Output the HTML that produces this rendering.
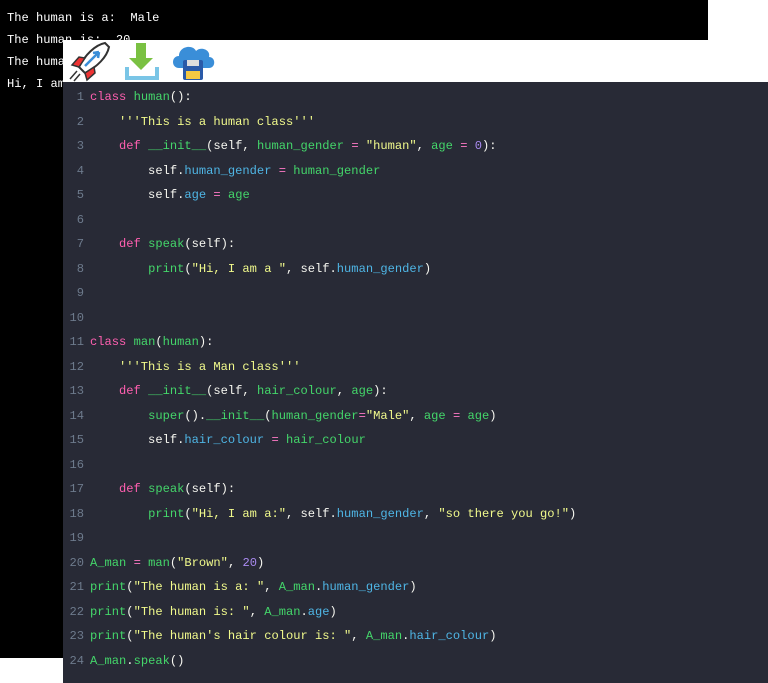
<!DOCTYPE html>
<html><head><style>
body{margin:0;width:768px;height:683px;background:#fff;position:relative;overflow:hidden;font-family:"Liberation Mono",monospace;}
#term{position:absolute;left:0;top:0;width:708px;height:658px;background:#000;color:#fff;font-size:12.1px;}
#term div{position:absolute;left:7px;white-space:pre;}
#bar{position:absolute;left:63px;top:40px;width:705px;height:42px;background:#fff;}
#code{position:absolute;left:63px;top:82px;width:705px;height:601px;background:#282a36;font-size:12.1px;}
.l{position:absolute;left:0;height:24px;white-space:pre;color:#f8f8f2;}
.n{display:inline-block;width:21px;text-align:right;color:#6d7a8c;margin-right:6px;}
.k{color:#ff5fb0}.f{color:#44d66a}.s{color:#f1fa8c}.a{color:#4fb6e6}.p{color:#a98af0}.o{color:#ff79c6}
</style></head><body>
<div id="term">
<div style="top:11px">The human is a:  Male</div>
<div style="top:33px">The human is:  20</div>
<div style="top:55px">The human's hair colour is:  Brown</div>
<div style="top:77px">Hi, I am a: Male so there you go!</div>
</div>
<div id="bar">
<svg width="230" height="42" viewBox="0 0 230 42">
<g transform="translate(6,1)">
<path d="M36 2 C26 4 16 14 10 26 L16 32 C28 26 38 16 40 6 Z" fill="#fff" stroke="#333" stroke-width="2"/>
<path d="M10 26 L3 24 L10 16 L16 17 Z" fill="#e33" stroke="#333" stroke-width="1.5"/>
<path d="M16 32 L18 39 L26 32 L25 26 Z" fill="#e33" stroke="#333" stroke-width="1.5"/>
<path d="M16 25 L30 11 M30 11 L24 12 M30 11 L29 17" stroke="#3a8ed8" stroke-width="2.5" fill="none"/>
<path d="M8 30 L1 38 M11 33 L5 40" stroke="#333" stroke-width="1.5"/>
</g>
<g transform="translate(62,3)">
<rect x="11" y="0" width="10" height="15" fill="#7ac142"/>
<path d="M4 15 L28 15 L16 27 Z" fill="#7ac142"/>
<path d="M2 24 L2 35 L32 35 L32 24" stroke="#7ac5e6" stroke-width="4" fill="none"/>
</g>
<g transform="translate(108,2)">
<path d="M8 26 C0 26 0 14 8 14 C8 4 22 2 25 9 C30 4 40 8 38 15 C45 15 45 26 38 26 Z" fill="#3a8ed8"/>
<rect x="12" y="18" width="20" height="20" rx="2" fill="#2a5aa8"/>
<rect x="16" y="18" width="12" height="6" fill="#ddd"/>
<rect x="15" y="29" width="14" height="8" fill="#f5c842"/>
</g>
</svg>
</div>
<div id="code">
<div class="l" style="top:8px"><span class="n">1</span><span class="k">class</span> <span class="f">human</span>():</div>
<div class="l" style="top:32.5px"><span class="n">2</span>    <span class="s">'''This is a human class'''</span></div>
<div class="l" style="top:57px"><span class="n">3</span>    <span class="k">def</span> <span class="f">__init__</span>(self, <span class="f">human_gender</span> <span class="o">=</span> <span class="s">"human"</span>, <span class="f">age</span> <span class="o">=</span> <span class="p">0</span>):</div>
<div class="l" style="top:81.5px"><span class="n">4</span>        self.<span class="a">human_gender</span> <span class="o">=</span> <span class="f">human_gender</span></div>
<div class="l" style="top:106px"><span class="n">5</span>        self.<span class="a">age</span> <span class="o">=</span> <span class="f">age</span></div>
<div class="l" style="top:130.5px"><span class="n">6</span></div>
<div class="l" style="top:155px"><span class="n">7</span>    <span class="k">def</span> <span class="f">speak</span>(self):</div>
<div class="l" style="top:179.5px"><span class="n">8</span>        <span class="f">print</span>(<span class="s">"Hi, I am a "</span>, self.<span class="a">human_gender</span>)</div>
<div class="l" style="top:204px"><span class="n">9</span></div>
<div class="l" style="top:228.5px"><span class="n">10</span></div>
<div class="l" style="top:253px"><span class="n">11</span><span class="k">class</span> <span class="f">man</span>(<span class="f">human</span>):</div>
<div class="l" style="top:277.5px"><span class="n">12</span>    <span class="s">'''This is a Man class'''</span></div>
<div class="l" style="top:302px"><span class="n">13</span>    <span class="k">def</span> <span class="f">__init__</span>(self, <span class="f">hair_colour</span>, <span class="f">age</span>):</div>
<div class="l" style="top:326.5px"><span class="n">14</span>        <span class="f">super</span>().<span class="f">__init__</span>(<span class="f">human_gender</span><span class="o">=</span><span class="s">"Male"</span>, <span class="f">age</span> <span class="o">=</span> <span class="f">age</span>)</div>
<div class="l" style="top:351px"><span class="n">15</span>        self.<span class="a">hair_colour</span> <span class="o">=</span> <span class="f">hair_colour</span></div>
<div class="l" style="top:375.5px"><span class="n">16</span></div>
<div class="l" style="top:400px"><span class="n">17</span>    <span class="k">def</span> <span class="f">speak</span>(self):</div>
<div class="l" style="top:424.5px"><span class="n">18</span>        <span class="f">print</span>(<span class="s">"Hi, I am a:"</span>, self.<span class="a">human_gender</span>, <span class="s">"so there you go!"</span>)</div>
<div class="l" style="top:449px"><span class="n">19</span></div>
<div class="l" style="top:473.5px"><span class="n">20</span><span class="f">A_man</span> <span class="o">=</span> <span class="f">man</span>(<span class="s">"Brown"</span>, <span class="p">20</span>)</div>
<div class="l" style="top:498px"><span class="n">21</span><span class="f">print</span>(<span class="s">"The human is a: "</span>, <span class="f">A_man</span>.<span class="a">human_gender</span>)</div>
<div class="l" style="top:522.5px"><span class="n">22</span><span class="f">print</span>(<span class="s">"The human is: "</span>, <span class="f">A_man</span>.<span class="a">age</span>)</div>
<div class="l" style="top:547px"><span class="n">23</span><span class="f">print</span>(<span class="s">"The human's hair colour is: "</span>, <span class="f">A_man</span>.<span class="a">hair_colour</span>)</div>
<div class="l" style="top:571.5px"><span class="n">24</span><span class="f">A_man</span>.<span class="f">speak</span>()</div>
</div>
</body></html>
